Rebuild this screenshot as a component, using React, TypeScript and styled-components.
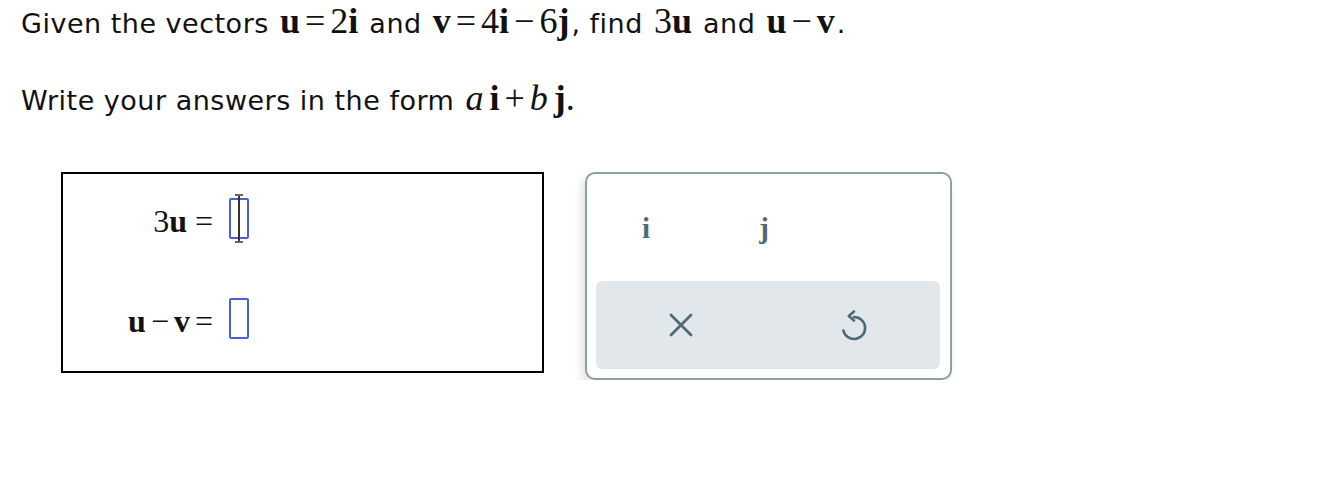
import React from "react";
import styled, { createGlobalStyle } from "styled-components";

const Global = createGlobalStyle`
  html, body { margin: 0; padding: 0; background: #ffffff; }
  body { font-family: "DejaVu Sans", Verdana, sans-serif; color: #111; }
`;

const Page = styled.div`
  padding: 3px 22px 0 21px;
`;

const Para = styled.p<{ $gap?: number }>`
  margin: 0 0 ${(p) => p.$gap ?? 0}px 0;
  font-size: 27px;
  letter-spacing: 0.5px;
  line-height: 38px;
  height: 38px;
  white-space: nowrap;
`;

const M = styled.span`
  font-family: "Liberation Serif", "Times New Roman", serif;
  font-size: 36px;
  letter-spacing: 0;
  line-height: 1;
  margin: 0 2px;
`;

const B = styled.span`
  font-weight: 700;
`;

const I = styled.span`
  font-style: italic;
  margin-right: 6px;
`;

const Op = styled.span<{ $l?: number; $r?: number }>`
  margin: 0 ${(p) => p.$r ?? 5}px 0 ${(p) => p.$l ?? 5}px;
`;

const Row = styled.div`
  display: flex;
  gap: 41px;
  align-items: flex-start;
  margin: 1px 0 0 40px;
`;

const AnswerBox = styled.div`
  width: 483px;
  height: 201px;
  border: 2px solid #000;
  display: grid;
  grid-template-columns: 150px 20px;
  column-gap: 16px;
  row-gap: 59px;
  align-content: start;
  padding-top: 24px;
  box-sizing: border-box;
`;

const Label = styled.div`
  justify-self: end;
  align-self: center;
  font-family: "Liberation Serif", "Times New Roman", serif;
  font-size: 32px;
  line-height: 1;
  white-space: nowrap;
  padding-top: 5px;
`;

const InputSlot = styled.div`
  position: relative;
  width: 20px;
  height: 41px;
  border: 2px solid #4b5fd8;
  border-radius: 2px;
  box-sizing: border-box;
`;

const Caret = styled.div`
  position: absolute;
  left: 50%;
  top: -6px;
  bottom: -6px;
  width: 2px;
  margin-left: -1px;
  background: #333;
  &::before, &::after {
    content: "";
    position: absolute;
    left: -3px;
    width: 8px;
    height: 2px;
    background: #666;
  }
  &::before { top: 0; }
  &::after { bottom: 0; }
`;

const Keypad = styled.div`
  width: 367px;
  height: 208px;
  border: 2px solid #8d9ea6;
  border-radius: 10px;
  box-shadow: -3px 5px 10px rgba(0, 0, 0, 0.12);
  display: flex;
  flex-direction: column;
  padding: 0 10px 9px 9px;
  box-sizing: border-box;
`;

const KeyRow = styled.div`
  display: flex;
  gap: 58px;
  padding: 36px 0 0 20px;
  height: 75px;
  box-sizing: border-box;
`;

const VecKey = styled.div`
  width: 60px;
  height: 36px;
  display: flex;
  align-items: center;
  justify-content: center;
  font-family: "Liberation Serif", "Times New Roman", serif;
  font-weight: 700;
  font-size: 29px;
  color: #4e6a79;
`;

const ActionPanel = styled.div`
  margin-top: auto;
  height: 88px;
  background: #e1e7ea;
  border-radius: 6px;
  display: grid;
  grid-template-columns: 1fr 1fr;
  align-items: center;
  justify-items: center;
`;

const IconBtn = styled.div<{ $dx?: number }>`
  display: flex;
  align-items: center;
  justify-content: center;
  margin-left: ${(p) => p.$dx ?? 0}px;
`;

const CloseIcon = () => (
  <svg width="26" height="26" viewBox="0 0 26 26" fill="none">
    <path d="M3 3 L23 23 M23 3 L3 23" stroke="#4e6a79" strokeWidth="2.8" strokeLinecap="round" />
  </svg>
);

const UndoIcon = () => (
  <svg width="28" height="34" viewBox="0 0 28 34" fill="none">
    <path
      d="M14 9 A 11 11 0 1 1 3.4 22.5"
      stroke="#4e6a79"
      strokeWidth="2.6"
      strokeLinecap="round"
      fill="none"
    />
    <path d="M14 3.5 L8.8 8 L14 12.5" stroke="#4e6a79" strokeWidth="2.6" strokeLinecap="round" strokeLinejoin="round" />
  </svg>
);

export default function App() {
  return (
    <>
      <Global />
      <Page>
        <Para $gap={39}>
          Given the vectors{" "}
          <M>
            <B>u</B>
            <Op>=</Op>2<B>i</B>
          </M>{" "}
          and{" "}
          <M>
            <B>v</B>
            <Op>=</Op>4<B>i</B>
            <Op>−</Op>6<B>j</B>
          </M>
          , find{" "}
          <M>
            3<B>u</B>
          </M>{" "}
          and{" "}
          <M>
            <B>u</B>
            <Op>−</Op>
            <B>v</B>
          </M>
          .
        </Para>
        <Para $gap={54}>
          Write your answers in the form{" "}
          <M>
            <I>a</I>
            <B>i</B>
            <Op $l={5} $r={5}>+</Op>
            <I>b</I>
            <B>j</B>.
          </M>
        </Para>
        <Row>
          <AnswerBox>
            <Label>
              3<B>u</B>
              <Op $l={8} $r={0}>=</Op>
            </Label>
            <InputSlot>
              <Caret />
            </InputSlot>
            <Label>
              <B>u</B>
              <Op>−</Op>
              <B>v</B>
              <Op $r={0}>=</Op>
            </Label>
            <InputSlot />
          </AnswerBox>
          <Keypad>
            <KeyRow>
              <VecKey>i</VecKey>
              <VecKey>j</VecKey>
            </KeyRow>
            <ActionPanel>
              <IconBtn $dx={-3}>
                <CloseIcon />
              </IconBtn>
              <IconBtn>
                <UndoIcon />
              </IconBtn>
            </ActionPanel>
          </Keypad>
        </Row>
      </Page>
    </>
  );
}
